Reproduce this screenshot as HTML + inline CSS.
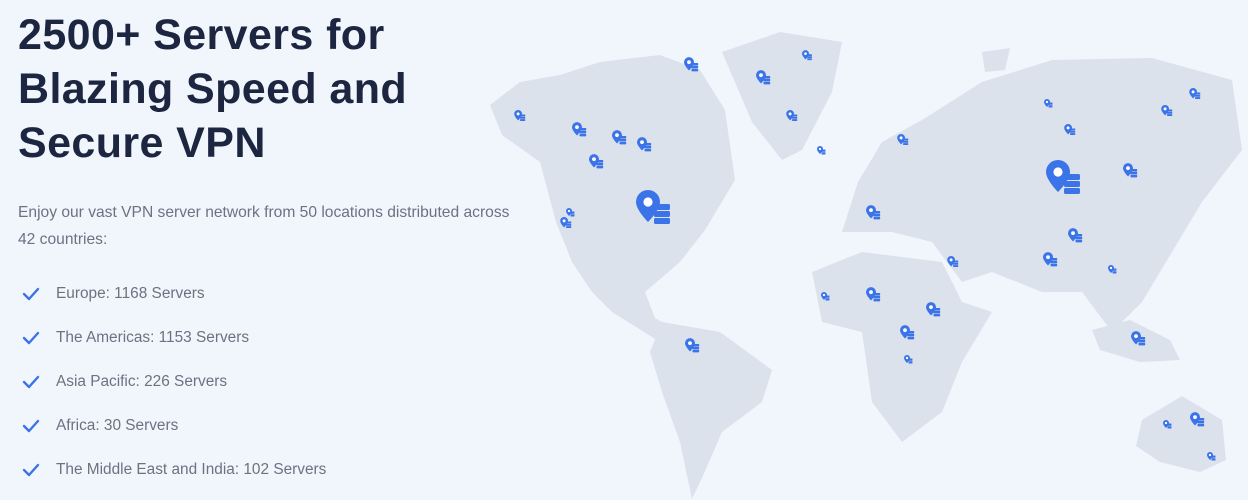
<!DOCTYPE html>
<html><head><meta charset="utf-8"><style>
html,body{margin:0;padding:0;}
body{width:1248px;height:499px;background:#f1f6fd;overflow:hidden;position:relative;font-family:"Liberation Sans",sans-serif;}
svg.map{position:absolute;left:0;top:0;}
h1{position:absolute;left:18px;top:8px;margin:0;font-size:43px;line-height:54px;font-weight:700;color:#1d2640;letter-spacing:0.4px;}
p{position:absolute;left:18px;top:199px;margin:0;width:510px;font-size:15.6px;line-height:27px;color:#6b7280;}
ul{position:absolute;left:20px;top:280px;margin:0;padding:0;list-style:none;}
li{height:44px;font-size:15.4px;line-height:28px;color:#6b7280;position:relative;padding-left:36px;}
li svg{position:absolute;left:2px;top:7px;}
</style></head><body>
<svg class="map" width="1248" height="499" viewBox="0 0 1248 499">
<defs>
<symbol id="pin" viewBox="0 0 24 20">
<path d="M6 0a6 6 0 0 1 6 6c0 4-6 10-6 10S0 10 0 6a6 6 0 0 1 6-6z" fill="#3b73e8"/>
<circle cx="6" cy="6" r="2.3" fill="#fff"/>
<rect x="9" y="7" width="8" height="3" rx="0.8" fill="#3b73e8"/>
<rect x="9" y="10.5" width="8" height="3" rx="0.8" fill="#3b73e8"/>
<rect x="9" y="14" width="8" height="3" rx="0.8" fill="#3b73e8"/>
</symbol>
</defs>
<g fill="#dbe2ec">
<path d="M490 105 L520 82 L560 75 L600 62 L660 55 L700 70 L725 110 L735 180 L705 230 L680 262 L645 292 L655 318 L690 338 L660 342 L612 312 L592 292 L572 262 L556 222 L540 162 L502 135 Z"/>
<path d="M662 322 L720 332 L772 370 L762 402 L722 432 L702 478 L692 499 L680 442 L662 392 L650 352 Z"/>
<path d="M722 52 L780 32 L842 42 L832 92 L802 150 L782 160 L752 122 Z"/>
<path d="M842 232 L858 182 L882 142 L922 120 L982 82 L1052 60 L1152 58 L1232 80 L1242 150 L1202 202 L1172 252 L1142 302 L1112 332 L1082 292 L1042 292 L992 272 L962 282 L932 242 L892 232 Z"/>
<path d="M812 272 L862 252 L942 262 L962 302 L992 312 L962 362 L942 412 L902 442 L872 402 L862 332 L822 322 Z"/>
<path d="M1142 420 L1182 396 L1222 420 L1226 460 L1200 472 L1160 462 L1136 446 Z"/>
<path d="M1092 330 L1130 320 L1170 340 L1180 360 L1140 362 L1100 350 Z"/>
<path d="M982 52 L1010 48 L1005 70 L985 72 Z"/>
</g>
<g>
<use href="#pin" x="684" y="57" width="20" height="17"/>
<use href="#pin" x="756" y="70" width="20" height="17"/>
<use href="#pin" x="802" y="50" width="14" height="12"/>
<use href="#pin" x="514" y="110" width="16" height="13"/>
<use href="#pin" x="572" y="122" width="20" height="17"/>
<use href="#pin" x="612" y="130" width="20" height="17"/>
<use href="#pin" x="637" y="137" width="20" height="17"/>
<use href="#pin" x="589" y="154" width="20" height="17"/>
<use href="#pin" x="566" y="208" width="12" height="10"/>
<use href="#pin" x="560" y="217" width="16" height="13"/>
<use href="#pin" x="786" y="110" width="16" height="13"/>
<use href="#pin" x="897" y="134" width="16" height="13"/>
<use href="#pin" x="817" y="146" width="12" height="10"/>
<use href="#pin" x="1044" y="99" width="12" height="10"/>
<use href="#pin" x="1064" y="124" width="16" height="13"/>
<use href="#pin" x="1161" y="105" width="16" height="13"/>
<use href="#pin" x="1189" y="88" width="16" height="13"/>
<use href="#pin" x="1123" y="163" width="20" height="17"/>
<use href="#pin" x="866" y="205" width="20" height="17"/>
<use href="#pin" x="1068" y="228" width="20" height="17"/>
<use href="#pin" x="1043" y="252" width="20" height="17"/>
<use href="#pin" x="947" y="256" width="16" height="13"/>
<use href="#pin" x="1108" y="265" width="12" height="10"/>
<use href="#pin" x="821" y="292" width="12" height="10"/>
<use href="#pin" x="866" y="287" width="20" height="17"/>
<use href="#pin" x="926" y="302" width="20" height="17"/>
<use href="#pin" x="900" y="325" width="20" height="17"/>
<use href="#pin" x="904" y="355" width="12" height="10"/>
<use href="#pin" x="1131" y="331" width="20" height="17"/>
<use href="#pin" x="685" y="338" width="20" height="17"/>
<use href="#pin" x="1190" y="412" width="20" height="17"/>
<use href="#pin" x="1163" y="420" width="12" height="10"/>
<use href="#pin" x="1207" y="452" width="12" height="10"/>
<use href="#pin" x="636" y="190" width="48" height="40"/>
<use href="#pin" x="1046" y="160" width="48" height="40"/>
</g>
</svg>
<h1>2500+ Servers for<br>Blazing Speed and<br>Secure VPN</h1>
<p>Enjoy our vast VPN server network from 50 locations distributed across 42 countries:</p>
<ul>
<li><svg width="18" height="14" viewBox="0 0 18 14"><path d="M2 7l5 5L16 2" fill="none" stroke="#3b73e8" stroke-width="2.4" stroke-linecap="round" stroke-linejoin="round"/></svg>Europe: 1168 Servers</li>
<li><svg width="18" height="14" viewBox="0 0 18 14"><path d="M2 7l5 5L16 2" fill="none" stroke="#3b73e8" stroke-width="2.4" stroke-linecap="round" stroke-linejoin="round"/></svg>The Americas: 1153 Servers</li>
<li><svg width="18" height="14" viewBox="0 0 18 14"><path d="M2 7l5 5L16 2" fill="none" stroke="#3b73e8" stroke-width="2.4" stroke-linecap="round" stroke-linejoin="round"/></svg>Asia Pacific: 226 Servers</li>
<li><svg width="18" height="14" viewBox="0 0 18 14"><path d="M2 7l5 5L16 2" fill="none" stroke="#3b73e8" stroke-width="2.4" stroke-linecap="round" stroke-linejoin="round"/></svg>Africa: 30 Servers</li>
<li><svg width="18" height="14" viewBox="0 0 18 14"><path d="M2 7l5 5L16 2" fill="none" stroke="#3b73e8" stroke-width="2.4" stroke-linecap="round" stroke-linejoin="round"/></svg>The Middle East and India: 102 Servers</li>
</ul>
</body></html>
